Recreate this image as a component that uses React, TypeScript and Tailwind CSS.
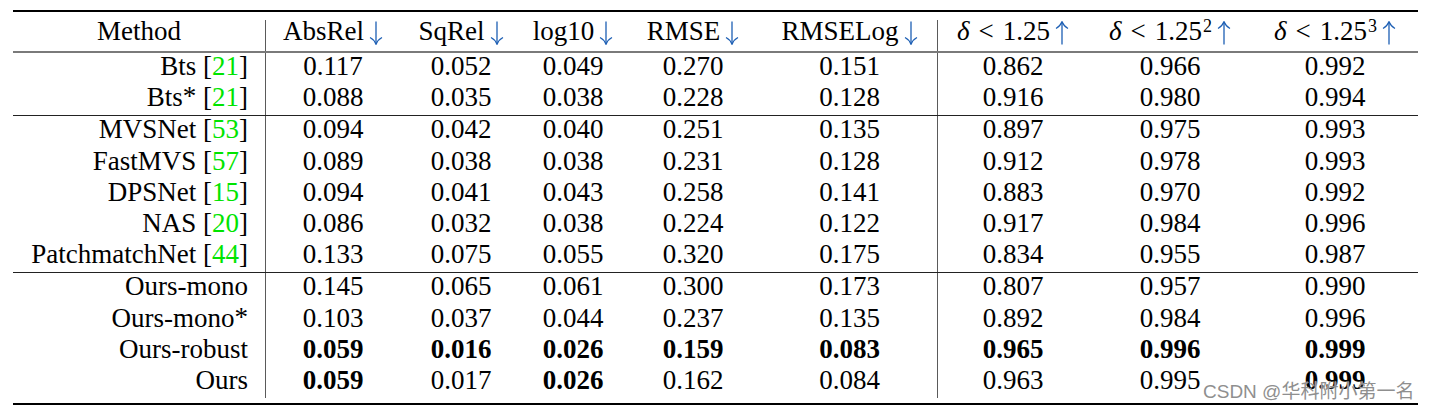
const grid =
  'grid grid-cols-[252px_1px_134px_122px_102px_138px_175px_1px_150px_164px_166px]'

type Row = {
  name: string
  star?: boolean
  ref?: string
  vals: string[]
  bold?: number[]
}

const groups: Row[][] = [
  [
    { name: 'Bts', ref: '21', vals: ['0.117', '0.052', '0.049', '0.270', '0.151', '0.862', '0.966', '0.992'] },
    { name: 'Bts', star: true, ref: '21', vals: ['0.088', '0.035', '0.038', '0.228', '0.128', '0.916', '0.980', '0.994'] },
  ],
  [
    { name: 'MVSNet', ref: '53', vals: ['0.094', '0.042', '0.040', '0.251', '0.135', '0.897', '0.975', '0.993'] },
    { name: 'FastMVS', ref: '57', vals: ['0.089', '0.038', '0.038', '0.231', '0.128', '0.912', '0.978', '0.993'] },
    { name: 'DPSNet', ref: '15', vals: ['0.094', '0.041', '0.043', '0.258', '0.141', '0.883', '0.970', '0.992'] },
    { name: 'NAS', ref: '20', vals: ['0.086', '0.032', '0.038', '0.224', '0.122', '0.917', '0.984', '0.996'] },
    { name: 'PatchmatchNet', ref: '44', vals: ['0.133', '0.075', '0.055', '0.320', '0.175', '0.834', '0.955', '0.987'] },
  ],
  [
    { name: 'Ours-mono', vals: ['0.145', '0.065', '0.061', '0.300', '0.173', '0.807', '0.957', '0.990'] },
    { name: 'Ours-mono', star: true, vals: ['0.103', '0.037', '0.044', '0.237', '0.135', '0.892', '0.984', '0.996'] },
    {
      name: 'Ours-robust',
      vals: ['0.059', '0.016', '0.026', '0.159', '0.083', '0.965', '0.996', '0.999'],
      bold: [0, 1, 2, 3, 4, 5, 6, 7],
    },
    { name: 'Ours', vals: ['0.059', '0.017', '0.026', '0.162', '0.084', '0.963', '0.995', '0.999'], bold: [0, 2, 7] },
  ],
]

function Arrow({ up }: { up?: boolean }) {
  return (
    <svg
      width="14"
      height="24"
      viewBox="0 0 14 24"
      className={'inline-block ml-[5px] align-[-5px] ' + (up ? 'rotate-180' : '')}
    >
      <path d="M7 0.5V23" stroke="#1d5fb4" strokeWidth="1.3" fill="none" />
      <path d="M1 16.5Q5 18.5 7 23.2Q9 18.5 13 16.5" stroke="#1d5fb4" strokeWidth="1.3" fill="none" />
    </svg>
  )
}

function Delta({ exp }: { exp?: string }) {
  return (
    <span className="whitespace-nowrap">
      <i>δ</i>
      <span className="mx-[9px]">&lt;</span>
      1.25
      {exp && <sup className="text-[18px] relative -top-[8px] ml-[1px]">{exp}</sup>}
      <Arrow up />
    </span>
  )
}

function DataRow({ row }: { row: Row }) {
  return (
    <div className={grid + ' h-[31.2px] leading-[26px]'}>
      <div className="text-right pr-[17px] whitespace-nowrap">
        {row.name}
        {row.star && <span className="relative -top-[1px]">*</span>}
        {row.ref && (
          <>
            {' '}[<span className="text-[#00e400]">{row.ref}</span>]
          </>
        )}
      </div>
      <div className="bg-[#5a5a5a]" />
      {row.vals.slice(0, 5).map((v, i) => (
        <div key={i} className={'text-center ' + (row.bold?.includes(i) ? 'font-bold' : '')}>
          {v}
        </div>
      ))}
      <div className="bg-[#5a5a5a]" />
      {row.vals.slice(5).map((v, i) => (
        <div key={i} className={'text-center ' + (row.bold?.includes(i + 5) ? 'font-bold' : '')}>
          {v}
        </div>
      ))}
    </div>
  )
}

export default function App() {
  const heads = ['AbsRel', 'SqRel', 'log10', 'RMSE', 'RMSELog']
  return (
    <div className="relative w-[1429px] h-[412px] bg-white text-black text-[27px] font-['Liberation_Serif','Times_New_Roman',serif]">
      <div className="ml-[13px] w-[1405px] pt-[10px]">
        {/* top rule */}
        <div className="h-[2px] bg-black" />

        {/* header */}
        <div className={grid + ' h-[39px] leading-[39px]'}>
          <div className="text-center">Method</div>
          <div className="mt-[8px] bg-[#5a5a5a]" />
          {heads.map((h) => (
            <div key={h} className="text-center whitespace-nowrap">
              {h}
              <Arrow />
            </div>
          ))}
          <div className="mt-[8px] bg-[#5a5a5a]" />
          <div className="text-center">
            <Delta />
          </div>
          <div className="text-center">
            <Delta exp="2" />
          </div>
          <div className="text-center">
            <Delta exp="3" />
          </div>
        </div>
        <div className="h-[2px] bg-[#7a7a7a]" />

        {groups.map((g, gi) => (
          <div key={gi}>
            {gi > 0 && <div className="h-px bg-[#222]" />}
            {g.map((r, ri) => (
              <DataRow key={ri} row={r} />
            ))}
          </div>
        ))}

        {/* bottom rule */}
        <div className="mt-[5px] h-[2px] bg-black" />
      </div>

      {/* watermark */}
      <div className="absolute left-[1203px] top-[379px] text-[19px] leading-[26px] text-[#8f8f8f] whitespace-nowrap font-['Liberation_Sans','Noto_Sans_CJK_SC',sans-serif] [text-shadow:0_0_1px_#fff]">
        CSDN @华科附小第一名
      </div>
    </div>
  )
}
